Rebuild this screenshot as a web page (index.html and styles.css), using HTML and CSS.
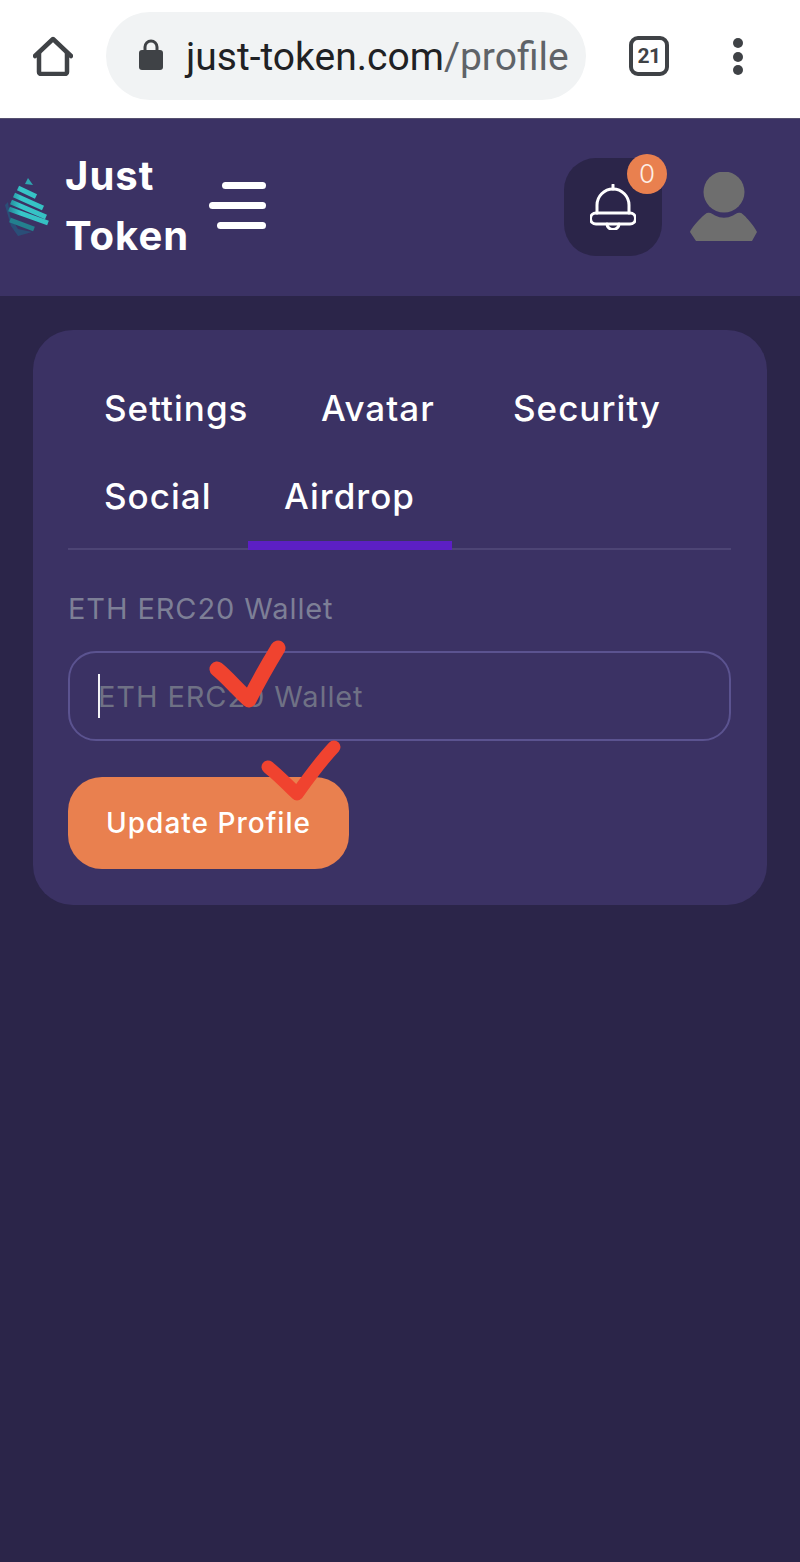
FILE: index.html
```html
<!DOCTYPE html>
<html lang="en">
<head>
<meta charset="utf-8">
<title>Just Token - Profile</title>
<link rel="stylesheet" href="styles.css">
</head>
<body>
<div class="browser-bar">
  <svg class="home-icon" width="40" height="40" viewBox="0 0 40 40" fill="none" stroke="#3f4246" stroke-width="4.500" stroke-linejoin="round" stroke-linecap="round"><path d="M2 20 20 3l18 17"/><path d="M6 17v19a2 2 0 0 0 2 2h24a2 2 0 0 0 2-2V17"/></svg>
  <div class="url-pill">
    <svg class="lock-icon" width="26" height="32" viewBox="0 0 26 32"><path d="M7 13V8a6 6 0 0 1 12 0v5" fill="none" stroke="#3f4246" stroke-width="3"/><rect x="1" y="11" width="24" height="20" rx="3" fill="#3f4246"/></svg>
    <div class="url-text">just-token.com<span class="url-path">/profile</span></div>
  </div>
  <div class="tab-count">21</div>
  <div class="kebab"><i></i><i></i><i></i></div>
</div>

<header class="site-header">
  <svg class="logo" width="46" height="58" viewBox="0 0 46 58" fill="none" stroke-width="5">
    <defs>
      <linearGradient id="stripe" x1="0" y1="0" x2="1" y2="0">
        <stop offset="0" stop-color="#23899a"/>
        <stop offset=".3" stop-color="#37c6c9"/>
        <stop offset="1" stop-color="#35c0c2"/>
      </linearGradient>
    </defs>
    <path d="M24 0l5 7-8-1z" fill="#2fa6b0"/>
    <path d="M1 27l6 21 7 10 14-4-14-3-8-13-2-14z" fill="#245a80" opacity=".7"/>
    <path d="M14 10l18 8.500M10 17l29 13M7 24l35 15M5 31l39 14" stroke="url(#stripe)"/>
    <path d="M6 42l24 9" stroke="#23808e"/>
  </svg>
  <div class="brand">Just<br>Token</div>
  <div class="burger"><i class="b1"></i><i class="b2"></i><i class="b3"></i></div>
  <div class="header-right">
    <div class="bell-box">
      <svg width="46" height="46" viewBox="0 0 46 46" fill="none" stroke="#fff" stroke-width="3" stroke-linejoin="round" stroke-linecap="round"><path d="M23 1v4"/><path d="M7 29v-8a16 16 0 0 1 32 0v8"/><path d="M6 29h34a5.500 5.500 0 0 1 0 11H6a5.500 5.500 0 0 1 0-11z"/><path d="M17 40a6 5.500 0 0 0 12 0"/></svg>
      <span class="badge">0</span>
    </div>
    <svg class="avatar" width="68" height="70" viewBox="0 0 68 70" fill="#6e6e6e"><circle cx="34" cy="20" r="20.500"/><path d="M17 41c4-1 5 1 8 2.500a20 20 0 0 0 18 0c3-1.500 4-3.500 8-2.500 3 1 14 14 16 19l-5 9H6l-6-9c2-5 14-18 17-19z"/></svg>
  </div>
</header>

<main class="content">
  <section class="card">
    <nav class="tabs">
      <a class="tab tab-settings">Settings</a>
      <a class="tab tab-avatar">Avatar</a>
      <a class="tab">Security</a>
      <a class="tab tab-social">Social</a>
      <a class="tab tab-airdrop active">Airdrop</a>
    </nav>
    <label class="field-label">ETH ERC20 Wallet</label>
    <div class="input"><span class="caret"></span><span class="placeholder">ETH ERC20 Wallet</span></div>
    <button class="btn">Update Profile</button>
  </section>
</main>

<svg class="marks" width="800" height="820" viewBox="0 0 800 820" fill="none" stroke="#f0432f" stroke-width="15" stroke-linecap="round" stroke-linejoin="round">
  <path d="M217 669c9 7 20 20 32 31 8-16 18-34 29-52"/>
  <path class="mark-thin" d="M268 767c9 7 19 17 29 27 10-14 22-31 37-47"/>
</svg>
</body>
</html>
```
FILE: styles.css
```css
* { box-sizing: border-box; }
html, body { margin: 0; padding: 0; }
body {
  position: relative;
  width: 800px;
  min-height: 1562px;
  background: #2b2549;
  font-family: "Inter", "Liberation Sans", sans-serif;
  color: #fff;
  overflow: hidden;
}

/* browser chrome */
.browser-bar {
  height: 119px;
  background: #fff;
  border-bottom: 1px solid #55506f;
  display: flex;
  align-items: flex-start;
  padding: 12px 0 0 33px;
}
.home-icon { margin-top: 24px; flex: none; }
.url-pill {
  margin-left: 33px;
  width: 480px;
  height: 88px;
  border-radius: 44px;
  background: #f1f3f4;
  display: flex;
  align-items: center;
  padding-left: 32px;
  flex: none;
}
.lock-icon { flex: none; margin-top: -3px; }
.url-text {
  margin-left: 22px;
  white-space: nowrap;
  font-family: "Roboto", sans-serif;
  font-size: 39px;
  color: #202124;
  margin-top: 2px;
}
.url-path { color: #5f6368; }
.tab-count {
  margin: 24px 0 0 43px;
  width: 40px;
  height: 40px;
  border: 4px solid #3f4246;
  border-radius: 9px;
  font-family: "Roboto", sans-serif;
  font-weight: 700;
  font-size: 21px;
  letter-spacing: -0.5px;
  color: #3f4246;
  display: flex;
  align-items: center;
  justify-content: center;
  flex: none;
}
.kebab {
  margin: 26px 0 0 64px;
  display: flex;
  flex-direction: column;
  gap: 3.500px;
}
.kebab i {
  display: block;
  width: 10px;
  height: 10px;
  border-radius: 50%;
  background: #3f4246;
}

/* site header */
.site-header {
  height: 177px;
  background: #3b3264;
  display: flex;
  align-items: center;
  padding: 0 0 2px 4px;
}
.logo { flex: none; }
.brand {
  margin: -1px 0 0 15px;
  font-weight: 700;
  font-size: 40px;
  letter-spacing: 1px;
  line-height: 60px;
  width: 144px;
  flex: none;
}
.burger {
  margin: -2px 0 0 0;
  width: 57px;
  display: flex;
  flex-direction: column;
  align-items: flex-end;
  gap: 13px;
  flex: none;
}
.burger i { display: block; height: 7px; border-radius: 4px; background: #fff; }
.b1 { width: 44px; }
.b2 { width: 57px; }
.b3 { width: 49px; }
.header-right {
  margin-left: auto;
  padding-right: 42px;
  display: flex;
  align-items: center;
  gap: 28px;
}
.bell-box {
  position: relative;
  width: 98px;
  height: 98px;
  border-radius: 32px;
  background: #2b2549;
  display: flex;
  align-items: center;
  justify-content: center;
}
.badge {
  position: absolute;
  top: -4px;
  right: -5px;
  width: 40px;
  height: 40px;
  border-radius: 50%;
  background: #e9804f;
  color: #fdeee6;
  font-size: 26px;
  font-weight: 300;
  display: flex;
  align-items: center;
  justify-content: center;
}
.avatar { flex: none; }

/* profile card */
.content { padding: 34px 33px 0; }
.card {
  height: 575px;
  background: #3b3264;
  border-radius: 40px;
  padding: 35px 36px 0 35px;
}
.tabs {
  display: flex;
  flex-wrap: wrap;
  border-bottom: 2px solid #4d4575;
  height: 185px;
  align-content: flex-start;
}
.tab {
  position: relative;
  height: 87.500px;
  padding: 0 36px;
  font-size: 35px;
  font-weight: 500;
  letter-spacing: 1px;
  line-height: 86px;
}
.tab-settings { width: 217px; }
.tab-avatar { width: 192px; }
.tab-social { width: 180px; }
.tab-airdrop { width: 204px; }
.tab.active::after {
  content: "";
  position: absolute;
  left: 0;
  right: 0;
  bottom: -10px;
  height: 9px;
  background: #5c1fc4;
}
.field-label {
  display: block;
  margin-top: 37px;
  font-size: 29px;
  letter-spacing: 0.9px;
  line-height: 44px;
  color: #7d7f96;
}
.input {
  margin-top: 20px;
  height: 90px;
  border: 2px solid #5b5390;
  border-radius: 28px;
  display: flex;
  align-items: center;
  padding-left: 28px;
}
.caret { width: 2px; height: 44px; background: #f2f2f6; flex: none; }
.placeholder { margin-left: -2px; font-size: 29px; letter-spacing: 0.9px; color: #6f7185; }
.btn {
  display: block;
  margin-top: 36px;
  width: 281px;
  height: 92px;
  border: 0;
  border-radius: 34px;
  background: #e9804f;
  color: #fff;
  font-family: inherit;
  font-size: 28px;
  letter-spacing: 1px;
  font-weight: 500;
}

/* hand-drawn annotations over the form */
.marks { position: absolute; left: 0; top: 0; pointer-events: none; }
.mark-thin { stroke-width: 13; }
```
